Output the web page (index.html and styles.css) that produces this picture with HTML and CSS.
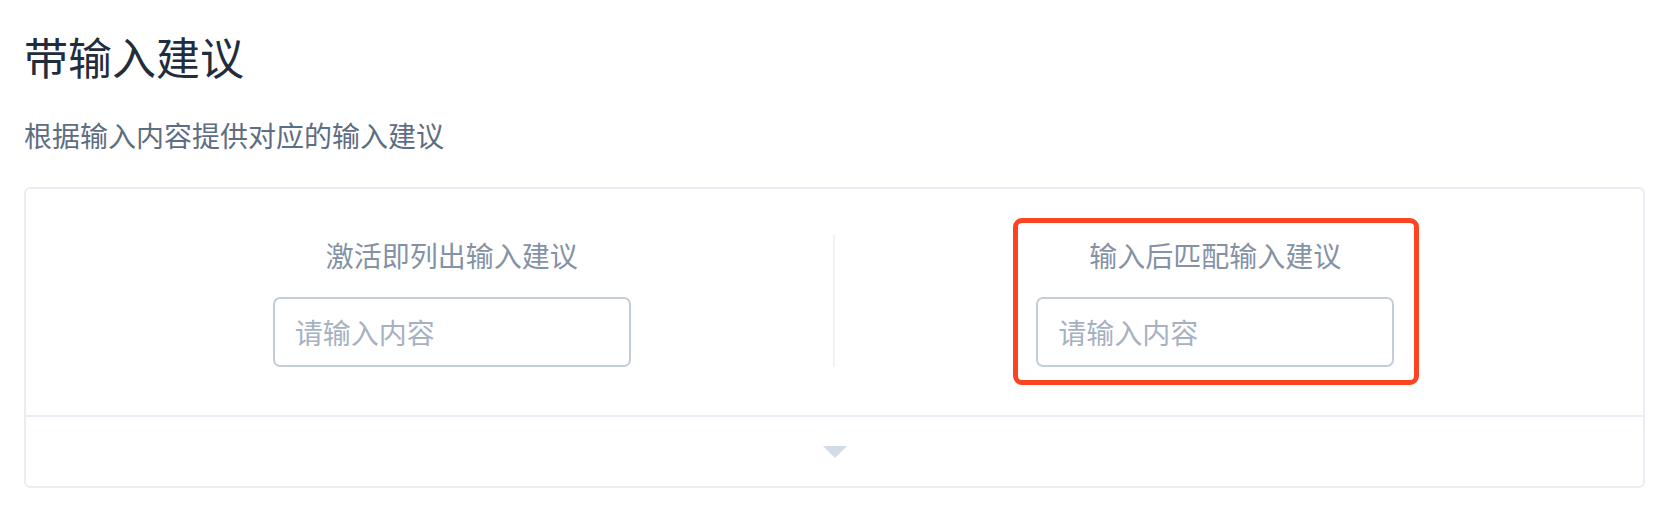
FILE: index.html
```html
<!DOCTYPE html>
<html lang="zh">
<head>
<meta charset="utf-8">
<link rel="stylesheet" href="styles.css">
</head>
<body>
<div class="page">
  <h3 class="title">带输入建议</h3>
  <p class="desc">根据输入内容提供对应的输入建议</p>
  <div class="demo-block">
    <div class="source">
      <div class="col col-left">
        <div class="group">
          <div class="sub-title">激活即列出输入建议</div>
          <div class="input"><span class="placeholder">请输入内容</span></div>
        </div>
      </div>
      <div class="col">
        <div class="group">
          <div class="sub-title">输入后匹配输入建议</div>
          <div class="input"><span class="placeholder">请输入内容</span></div>
          <div class="highlight"></div>
        </div>
      </div>
    </div>
    <div class="control">
      <span class="caret"></span>
    </div>
  </div>
</div>
</body>
</html>
```
FILE: styles.css
```css
html, body {
  margin: 0;
  padding: 0;
  background: #ffffff;
}
body {
  font-family: "Noto Sans CJK SC", "Noto Sans", sans-serif;
}
.page {
  padding: 0 33px 0 24px;
}
.title {
  margin: 26px 0 0;
  font-size: 44px;
  line-height: 60px;
  font-weight: 400;
  color: #1f2d3d;
}
.desc {
  margin: 29px 0 0;
  font-size: 28px;
  line-height: 40px;
  color: #5e6d82;
}
.demo-block {
  margin-top: 32px;
  border: 2px solid #ebedf5;
  border-radius: 6px;
}
.source {
  display: flex;
  padding: 46px 47px 48px 45px;
  border-bottom: 2px solid #eaedf6;
}
.col {
  flex: 1;
  display: flex;
  justify-content: center;
}
.col-left {
  border-right: 2px solid #f1f3f7;
}
.group {
  position: relative;
  display: flex;
  flex-direction: column;
  align-items: center;
}
.sub-title {
  font-size: 28px;
  line-height: 40px;
  color: #8492a6;
  margin-bottom: 22px;
}
.input {
  box-sizing: border-box;
  width: 358px;
  height: 70px;
  border: 2px solid #c5cdda;
  border-radius: 7px;
  padding-left: 20px;
  display: flex;
  align-items: center;
}
.placeholder {
  font-size: 28px;
  color: #a6b1c2;
}
.highlight {
  position: absolute;
  top: -17px;
  bottom: -18px;
  left: -23px;
  right: -25px;
  border: 5px solid #fc4420;
  border-radius: 9px;
}
.control {
  height: 69px;
  display: flex;
  align-items: center;
  justify-content: center;
}
.caret {
  width: 0;
  height: 0;
  border-left: 12px solid transparent;
  border-right: 12px solid transparent;
  border-top: 12px solid #d3dce6;
}
```
